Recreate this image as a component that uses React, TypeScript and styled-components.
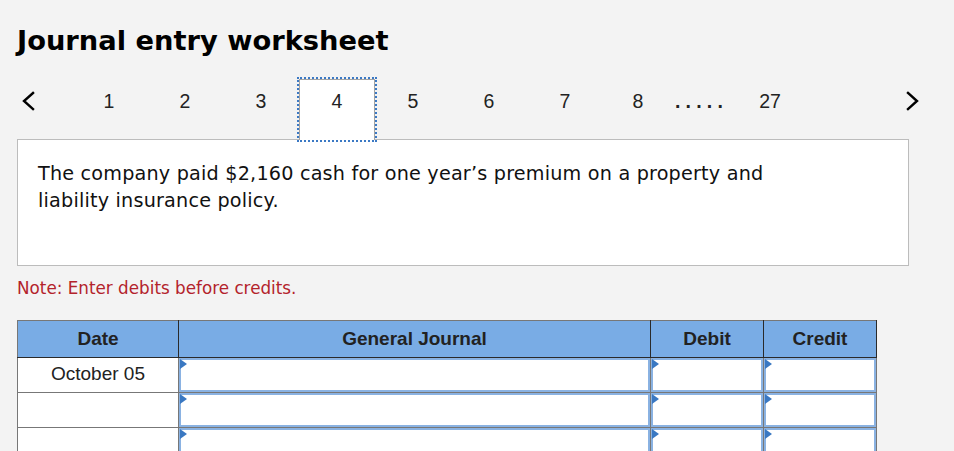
import React from "react"
import styled, { createGlobalStyle } from "styled-components"

const GlobalStyle = createGlobalStyle`
  html, body {
    margin: 0;
    padding: 0;
    background: #f3f3f3;
  }
`

const Page = styled.div`
  padding: 24px 45px 0 17px;
  font-family: "DejaVu Sans", Verdana, sans-serif;
  color: #111;
`

const Title = styled.h1`
  margin: 0;
  font-size: 27.3px;
  line-height: 34px;
  font-weight: bold;
  color: #000;
`

const Nav = styled.nav`
  display: flex;
  align-items: stretch;
  height: 61px;
  margin-top: 21px;
  margin-bottom: -1px;
  font-family: "Liberation Sans", Arial, sans-serif;
  font-size: 19.5px;
  color: #222;
`

const Arrow = styled.button<{ $side: "left" | "right" }>`
  display: flex;
  align-items: flex-start;
  justify-content: ${(p) => (p.$side === "left" ? "flex-start" : "center")};
  width: ${(p) => (p.$side === "left" ? "54px" : "30px")};
  padding: 12px 0 0 ${(p) => (p.$side === "left" ? "4px" : "0")};
  margin: 0 ${(p) => (p.$side === "right" ? "-19px" : "0")} 0
    ${(p) => (p.$side === "right" ? "auto" : "0")};
  border: 0;
  background: none;
  cursor: pointer;
`

const Step = styled.div<{ $active?: boolean; $w?: number }>`
  position: relative;
  width: ${(p) => p.$w ?? 76}px;
  box-sizing: border-box;
  text-align: center;
  line-height: 44px;
  ${(p) =>
    p.$active &&
    `
    z-index: 1;
    background: #fff;
    border: 1px solid #a3a3a3;
    border-bottom: 0;
    line-height: 42px;
    outline: 2px dotted #3b79c4;
  `}
`

const Dots = styled.div`
  width: 59px;
  line-height: 44px;
  font-weight: bold;
  letter-spacing: 5.2px;
  padding-left: 2px;
  box-sizing: border-box;
`

const Panel = styled.div`
  height: 127px;
  box-sizing: border-box;
  border: 1px solid #bcbcbc;
  background: #fff;
  padding: 20px 20px;
  font-size: 19.2px;
  letter-spacing: 0.2px;
  line-height: 27px;
  color: #111;
`

const Note = styled.p`
  margin: 12px 0 0;
  font-size: 16.8px;
  line-height: 20px;
  color: #b3232b;
`

const Table = styled.table`
  margin-top: 22px;
  width: 859px;
  border-collapse: collapse;
  table-layout: fixed;
  font-family: "Liberation Sans", Arial, sans-serif;
  font-size: 19px;
`

const Head = styled.th`
  height: 36px;
  padding: 0;
  background: #79ace5;
  color: #222;
  font-weight: bold;
  border: 1px solid #2a2a2a;
  border-top-color: #777;
  &:first-child {
    border-left-color: #777;
  }
`

const DateCell = styled.td`
  height: 34px;
  padding: 0;
  text-align: center;
  background: #fff;
  color: #222;
  border: 1px solid #777;
  vertical-align: top;
  line-height: 32px;
`

const EntryCell = styled.td`
  height: 34px;
  padding: 0;
  border: 1px solid #777;
`

const Field = styled.div`
  position: relative;
  height: 34px;
  box-sizing: border-box;
  margin: 0;
  background: #fff;
  border: 2px solid #8ab2e2;
  &::before {
    content: "";
    position: absolute;
    left: -1px;
    top: -1px;
    border-left: 7px solid #3a78c2;
    border-top: 5px solid transparent;
    border-bottom: 5px solid transparent;
  }
`

const Chevron = ({ dir }: { dir: "left" | "right" }) => (
  <svg width="14" height="20" viewBox="0 0 14 20">
    <path
      d={dir === "left" ? "M12 2 L3 10 L12 18" : "M2 2 L11 10 L2 18"}
      fill="none"
      stroke="#000"
      strokeWidth="2.4"
      strokeLinecap="square"
    />
  </svg>
)

const steps = [1, 2, 3, 4, 5, 6, 7, 8]
const rows = ["October 05", "", ""]

export default function App() {
  return (
    <>
      <GlobalStyle />
      <Page>
        <Title>Journal entry worksheet</Title>
        <Nav>
          <Arrow $side="left" aria-label="previous">
            <Chevron dir="left" />
          </Arrow>
          {steps.map((n) => (
            <Step key={n} $active={n === 4} $w={n === 8 ? 70 : 76}>
              {n}
            </Step>
          ))}
          <Dots>.....</Dots>
          <Step>27</Step>
          <Arrow $side="right" aria-label="next">
            <Chevron dir="right" />
          </Arrow>
        </Nav>
        <Panel>
          The company paid $2,160 cash for one year’s premium on a property and
          <br />
          liability insurance policy.
        </Panel>
        <Note>Note: Enter debits before credits.</Note>
        <Table>
          <colgroup>
            <col style={{ width: 161 }} />
            <col style={{ width: 472 }} />
            <col style={{ width: 113 }} />
            <col style={{ width: 113 }} />
          </colgroup>
          <thead>
            <tr>
              <Head>Date</Head>
              <Head>General Journal</Head>
              <Head>Debit</Head>
              <Head>Credit</Head>
            </tr>
          </thead>
          <tbody>
            {rows.map((d, i) => (
              <tr key={i}>
                <DateCell>{d}</DateCell>
                <EntryCell>
                  <Field />
                </EntryCell>
                <EntryCell>
                  <Field />
                </EntryCell>
                <EntryCell>
                  <Field />
                </EntryCell>
              </tr>
            ))}
          </tbody>
        </Table>
      </Page>
    </>
  )
}
